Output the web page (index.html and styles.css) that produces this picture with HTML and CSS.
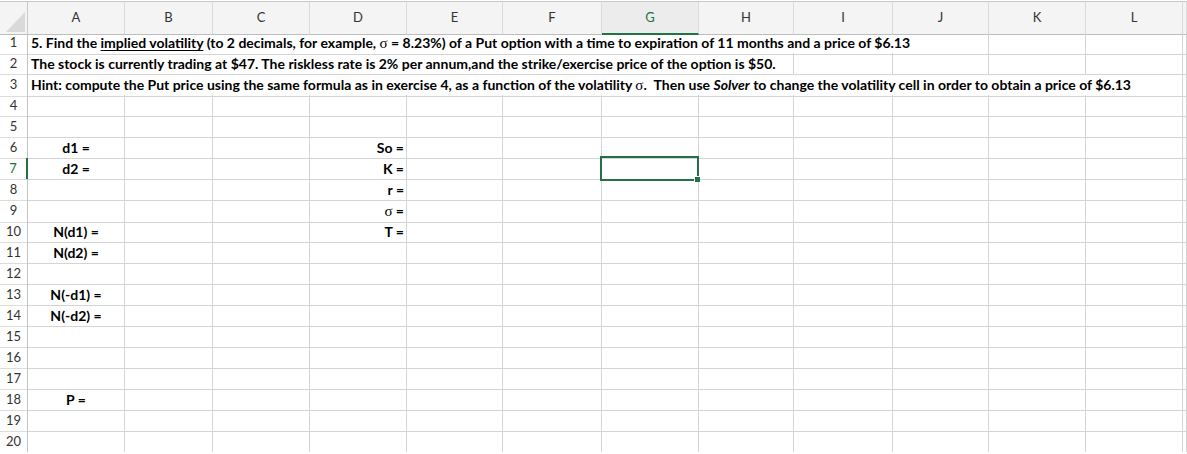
FILE: index.html
```html
<!DOCTYPE html>
<html>
<head>
<meta charset="utf-8">
<link rel="stylesheet" href="styles.css">
</head>
<body>
<div class="sheet">
  <div class="row head">
    <div class="h corner"><span class="tri"></span></div>
    <div class="h">A</div><div class="h">B</div><div class="h">C</div><div class="h">D</div>
    <div class="h">E</div><div class="h">F</div><div class="h sel">G</div><div class="h">H</div>
    <div class="h">I</div><div class="h">J</div><div class="h">K</div><div class="h">L</div><div class="h"></div>
  </div>

  <div class="row">
    <div class="n">1</div>
    <div class="c t span-a-j">5. Find the <u>implied volatility</u> (to 2 decimals, for example, <span class="sig">σ</span> = 8.23%) of a Put option with a time to expiration of 11 months and a price of $6.13</div>
    <div class="c"></div><div class="c"></div><div class="c"></div>
  </div>
  <div class="row">
    <div class="n">2</div>
    <div class="c t span-a-h">The stock is currently trading at $47. The riskless rate is 2% per annum,and the strike/exercise price of the option is $50.</div>
    <div class="c"></div><div class="c"></div><div class="c"></div><div class="c"></div><div class="c"></div>
  </div>
  <div class="row">
    <div class="n">3</div>
    <div class="c t span-a-l">Hint: compute the Put price using the same formula as in exercise 4, as a function of the volatility <span class="sig">σ</span>.&nbsp; Then use <i>Solver</i> to change the volatility cell in order to obtain a price of $6.13</div>
    <div class="c"></div>
  </div>
  <div class="row">
    <div class="n">4</div>
    <div class="c"></div><div class="c"></div><div class="c"></div><div class="c"></div><div class="c"></div><div class="c"></div>
    <div class="c"></div><div class="c"></div><div class="c"></div><div class="c"></div><div class="c"></div><div class="c"></div><div class="c"></div>
  </div>
  <div class="row">
    <div class="n">5</div>
    <div class="c"></div><div class="c"></div><div class="c"></div><div class="c"></div><div class="c"></div><div class="c"></div>
    <div class="c"></div><div class="c"></div><div class="c"></div><div class="c"></div><div class="c"></div><div class="c"></div><div class="c"></div>
  </div>
  <div class="row">
    <div class="n">6</div>
    <div class="c t mid">d1 =</div><div class="c"></div><div class="c"></div><div class="c t right">So =</div><div class="c"></div><div class="c"></div>
    <div class="c"></div><div class="c"></div><div class="c"></div><div class="c"></div><div class="c"></div><div class="c"></div><div class="c"></div>
  </div>
  <div class="row">
    <div class="n cur">7</div>
    <div class="c t mid">d2 =</div><div class="c"></div><div class="c"></div><div class="c t right">K =</div><div class="c"></div><div class="c"></div>
    <div class="c active"><span class="box"></span><span class="handle"></span></div><div class="c"></div><div class="c"></div><div class="c"></div><div class="c"></div><div class="c"></div><div class="c"></div>
  </div>
  <div class="row">
    <div class="n">8</div>
    <div class="c"></div><div class="c"></div><div class="c"></div><div class="c t right">r =</div><div class="c"></div><div class="c"></div>
    <div class="c"></div><div class="c"></div><div class="c"></div><div class="c"></div><div class="c"></div><div class="c"></div><div class="c"></div>
  </div>
  <div class="row">
    <div class="n">9</div>
    <div class="c"></div><div class="c"></div><div class="c"></div><div class="c t right"><span class="sig">σ</span> =</div><div class="c"></div><div class="c"></div>
    <div class="c"></div><div class="c"></div><div class="c"></div><div class="c"></div><div class="c"></div><div class="c"></div><div class="c"></div>
  </div>
  <div class="row">
    <div class="n">10</div>
    <div class="c t mid">N(d1) =</div><div class="c"></div><div class="c"></div><div class="c t right">T =</div><div class="c"></div><div class="c"></div>
    <div class="c"></div><div class="c"></div><div class="c"></div><div class="c"></div><div class="c"></div><div class="c"></div><div class="c"></div>
  </div>
  <div class="row">
    <div class="n">11</div>
    <div class="c t mid">N(d2) =</div><div class="c"></div><div class="c"></div><div class="c"></div><div class="c"></div><div class="c"></div>
    <div class="c"></div><div class="c"></div><div class="c"></div><div class="c"></div><div class="c"></div><div class="c"></div><div class="c"></div>
  </div>
  <div class="row">
    <div class="n">12</div>
    <div class="c"></div><div class="c"></div><div class="c"></div><div class="c"></div><div class="c"></div><div class="c"></div>
    <div class="c"></div><div class="c"></div><div class="c"></div><div class="c"></div><div class="c"></div><div class="c"></div><div class="c"></div>
  </div>
  <div class="row">
    <div class="n">13</div>
    <div class="c t mid">N(-d1) =</div><div class="c"></div><div class="c"></div><div class="c"></div><div class="c"></div><div class="c"></div>
    <div class="c"></div><div class="c"></div><div class="c"></div><div class="c"></div><div class="c"></div><div class="c"></div><div class="c"></div>
  </div>
  <div class="row">
    <div class="n">14</div>
    <div class="c t mid">N(-d2) =</div><div class="c"></div><div class="c"></div><div class="c"></div><div class="c"></div><div class="c"></div>
    <div class="c"></div><div class="c"></div><div class="c"></div><div class="c"></div><div class="c"></div><div class="c"></div><div class="c"></div>
  </div>
  <div class="row">
    <div class="n">15</div>
    <div class="c"></div><div class="c"></div><div class="c"></div><div class="c"></div><div class="c"></div><div class="c"></div>
    <div class="c"></div><div class="c"></div><div class="c"></div><div class="c"></div><div class="c"></div><div class="c"></div><div class="c"></div>
  </div>
  <div class="row">
    <div class="n">16</div>
    <div class="c"></div><div class="c"></div><div class="c"></div><div class="c"></div><div class="c"></div><div class="c"></div>
    <div class="c"></div><div class="c"></div><div class="c"></div><div class="c"></div><div class="c"></div><div class="c"></div><div class="c"></div>
  </div>
  <div class="row">
    <div class="n">17</div>
    <div class="c"></div><div class="c"></div><div class="c"></div><div class="c"></div><div class="c"></div><div class="c"></div>
    <div class="c"></div><div class="c"></div><div class="c"></div><div class="c"></div><div class="c"></div><div class="c"></div><div class="c"></div>
  </div>
  <div class="row">
    <div class="n">18</div>
    <div class="c t mid">P =</div><div class="c"></div><div class="c"></div><div class="c"></div><div class="c"></div><div class="c"></div>
    <div class="c"></div><div class="c"></div><div class="c"></div><div class="c"></div><div class="c"></div><div class="c"></div><div class="c"></div>
  </div>
  <div class="row">
    <div class="n">19</div>
    <div class="c"></div><div class="c"></div><div class="c"></div><div class="c"></div><div class="c"></div><div class="c"></div>
    <div class="c"></div><div class="c"></div><div class="c"></div><div class="c"></div><div class="c"></div><div class="c"></div><div class="c"></div>
  </div>
  <div class="row">
    <div class="n">20</div>
    <div class="c"></div><div class="c"></div><div class="c"></div><div class="c"></div><div class="c"></div><div class="c"></div>
    <div class="c"></div><div class="c"></div><div class="c"></div><div class="c"></div><div class="c"></div><div class="c"></div><div class="c"></div>
  </div>
</div>
</body>
</html>
```

FILE: styles.css
```css
* { box-sizing: border-box; }
html, body { margin: 0; padding: 0; background: #fff; }
body { font-family: Lato, "Open Sans", sans-serif; color: #000; overflow: hidden; }

.sheet { margin-top: 1px; width: 1187px; }

.row {
  display: grid;
  grid-template-columns: 28px 97px 88px 97px 97px 96px 99px 97px 95px 99px 96px 97px 97px 4px;
  height: 21px;
}
.row.head { height: 31px; }

.h {
  background: #f4f4f4;
  border-top: 1px solid #c9c9c9;
  border-bottom: 1px solid #bdbdbd;
  border-right: 1px solid #dadada;
  font-size: 13px;
  color: #333;
  text-align: center;
  line-height: 31px;
}
.h.sel { color: #217346; border-bottom: 2px solid #217346; background: #ececec; }
.h.corner { position: relative; border-right: 1px solid #c9c9c9; }
.tri {
  position: absolute;
  right: 2px;
  bottom: 2px;
  width: 0;
  height: 0;
  border-left: 19px solid transparent;
  border-bottom: 20px solid #d9d9d9;
}

.n {
  border-right: 1px solid #c4c4c4;
  border-bottom: 1px solid #dcdcdc;
  font-size: 13px;
  color: #333;
  text-align: center;
  line-height: 21px;
}
.n.cur { color: #217346; border-right: 2px solid #217346; }

.c {
  border-right: 1px solid #d4d4d4;
  border-bottom: 1px solid #d4d4d4;
  min-width: 0;
}
.t {
  font-size: 14px;
  font-weight: 700;
  white-space: nowrap;
  line-height: 21px;
  padding: 0 3px;
}
.mid { text-align: center; }
.right { text-align: right; padding-right: 2px; }
.span-a-j { grid-column: 2 / span 10; }
.span-a-h { grid-column: 2 / span 8; }
.span-a-l { grid-column: 2 / span 12; }
.sig { font-family: "Liberation Serif", "DejaVu Serif", serif; font-weight: 400; font-size: 15px; }
.t u { text-underline-offset: 2px; }

.active { position: relative; }
.box {
  position: absolute;
  left: -2px;
  top: -2px;
  right: -1px;
  bottom: -2px;
  border: 2px solid #217346;
}
.handle {
  position: absolute;
  right: -2px;
  bottom: -3px;
  width: 6px;
  height: 6px;
  background: #217346;
  border: 1px solid #fff;
  border-width: 1px 0 0 1px;
}
```
